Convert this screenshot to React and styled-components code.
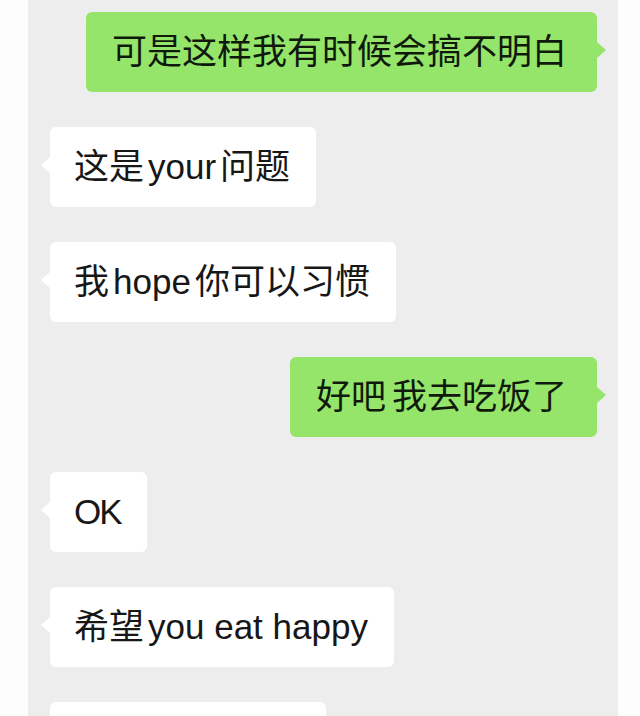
import React from 'react';
import styled, { createGlobalStyle, css } from 'styled-components';

const GlobalStyle = createGlobalStyle`
  html, body {
    margin: 0;
    padding: 0;
    background: #fdfdfd;
  }
  body {
    font-family: "Liberation Sans", "Noto Sans CJK SC", sans-serif;
  }
`;

const Page = styled.div`
  height: 716px;
  padding-left: 28px;
  overflow: hidden;
`;

const ChatPanel = styled.main`
  width: 590px;
  height: 716px;
  background: #ededed;
  padding: 12px 21px 0 22px;
  box-sizing: border-box;
  display: flex;
  flex-direction: column;
  gap: 35px;
  overflow: hidden;
`;

const Row = styled.div`
  display: flex;
  justify-content: ${(p) => (p.$mine ? 'flex-end' : 'flex-start')};
  flex-shrink: 0;
`;

const Bubble = styled.div`
  position: relative;
  height: 80px;
  box-sizing: border-box;
  padding: 0 26px 0 24px;
  display: flex;
  align-items: center;
  border-radius: 6px;
  font-size: 35px;
  line-height: 44px;
  color: #171717;
  white-space: nowrap;
  background: ${(p) => (p.$mine ? '#95e56a' : '#ffffff')};
  ${(p) => p.$width && `width: ${p.$width}px;`}

  &::before {
    content: '';
    position: absolute;
    top: 30px;
    border-top: 8px solid transparent;
    border-bottom: 8px solid transparent;
    ${(p) =>
      p.$mine
        ? css`
            right: -9px;
            border-left: 9px solid #95e56a;
          `
        : css`
            left: -9px;
            border-right: 9px solid #ffffff;
          `}
  }

  ${(p) =>
    p.$mine &&
    css`
      padding: 0 30px 0 26px;
      color: #0f1a0c;
    `}
`;

const Gap = styled.span`
  display: inline-block;
  width: 6px;
`;

// latin words sit a little apart from the CJK around them
const Latin = styled.span`
  margin: 0 ${(p) => (p.$tight ? 0 : 4)}px;
  letter-spacing: ${(p) => (p.$tight ? '-2px' : '0')};

  &:last-child {
    margin-right: 0;
  }
`;

const messages = [
  { mine: true, parts: ['可是这样我有时候会搞不明白'] },
  { mine: false, parts: ['这是', { en: 'your' }, '问题'] },
  { mine: false, parts: ['我', { en: 'hope' }, '你可以习惯'] },
  { mine: true, parts: ['好吧', { gap: true }, '我去吃饭了'] },
  { mine: false, parts: [{ en: 'OK', tight: true }] },
  { mine: false, parts: ['希望', { en: 'you eat happy' }] },
  { mine: false, parts: [], width: 276 },
];

export default function App() {
  return (
    <>
      <GlobalStyle />
      <Page>
        <ChatPanel>
          {messages.map((m, i) => (
            <Row key={i} $mine={m.mine}>
              <Bubble $mine={m.mine} $width={m.width}>
                {m.parts.map((p, j) => {
                  if (typeof p === 'string') return <span key={j}>{p}</span>;
                  if (p.gap) return <Gap key={j} />;
                  return (
                    <Latin key={j} $tight={p.tight}>
                      {p.en}
                    </Latin>
                  );
                })}
              </Bubble>
            </Row>
          ))}
        </ChatPanel>
      </Page>
    </>
  );
}
